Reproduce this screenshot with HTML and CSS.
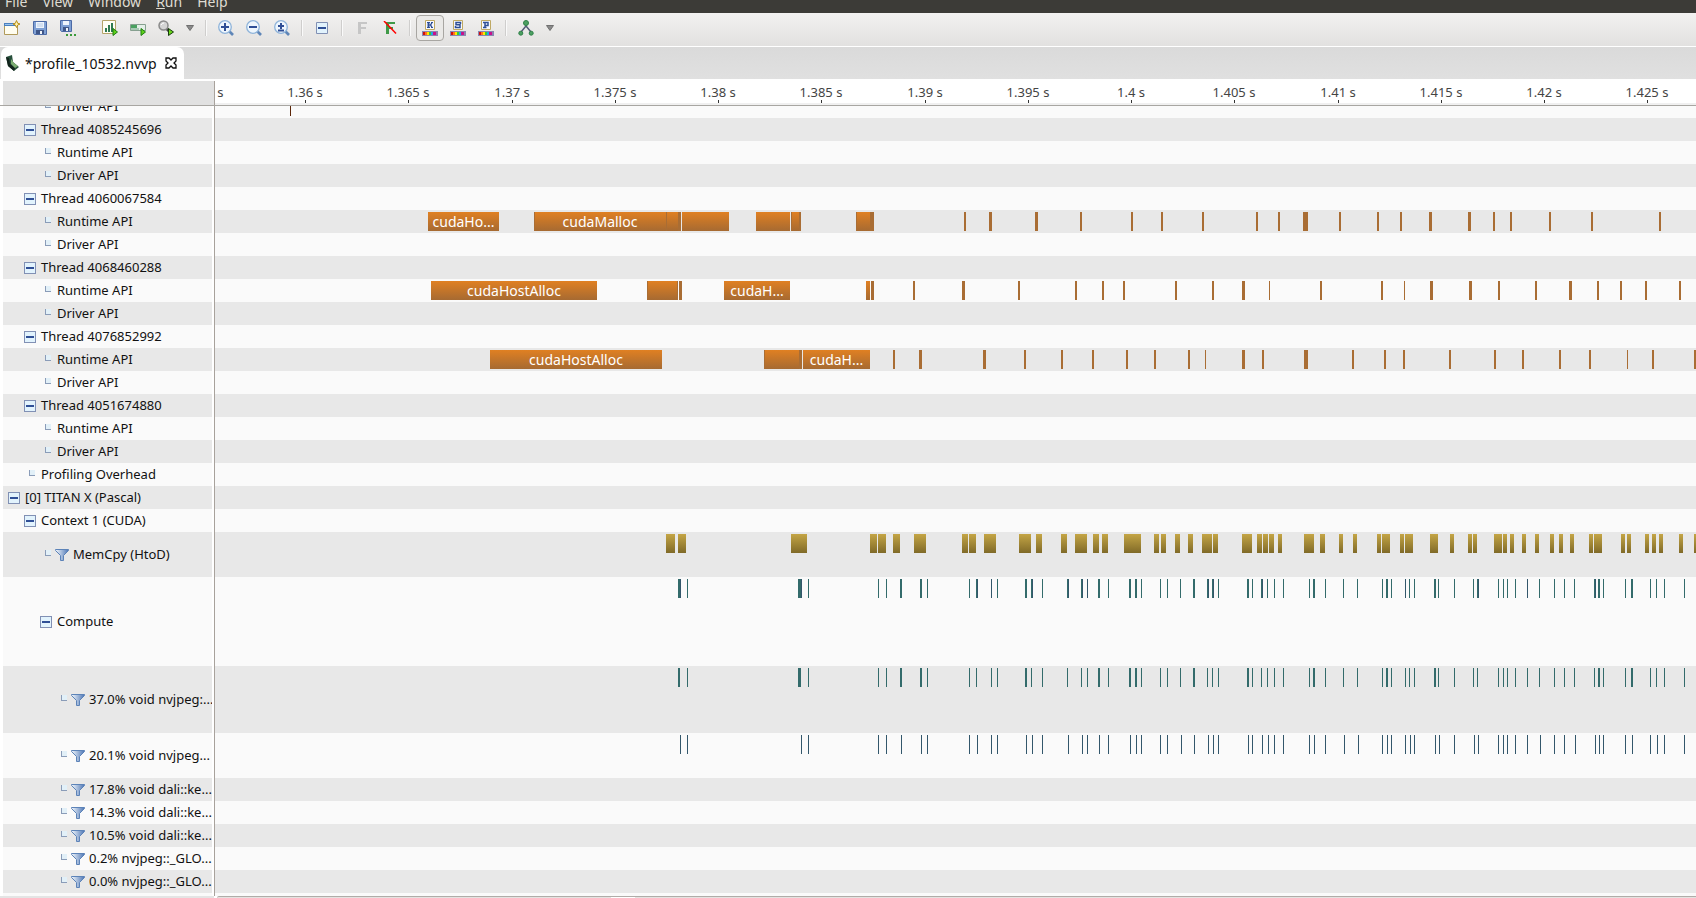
FILE: index.html
```html
<!DOCTYPE html>
<html lang="en">
<head>
    <meta charset="UTF-8">
    <meta name="viewport" content="width=device-width, initial-scale=1.0">
    <title>profile_10532.nvvp</title>
    <link rel="stylesheet" href="styles.css">
</head>
<body>
    <!-- Shared icons -->
    <svg class="defs" width="0" height="0" aria-hidden="true">
        <defs>
            <linearGradient id="funnelFill" x1="0" x2="1">
                <stop offset="0" stop-color="#f4f9fd"/>
                <stop offset="1" stop-color="#4b74b4"/>
            </linearGradient>
            <symbol id="play" viewBox="0 0 6 8">
                <path d="M1 0.5L5.5 4 1 7.5z" fill="#5fd11a" stroke="#1c7d10"/>
            </symbol>
            <symbol id="filter" viewBox="0 0 14 12">
                <path d="M0.5 0.5h13v1L8.500 6.500v5h-3v-5L0.500 1.500z" fill="url(#funnelFill)" stroke="#5c83b8"/>
            </symbol>
            <symbol id="glass" viewBox="0 0 16 16">
                <path d="M11 11l4 4" stroke="#5f86b8" stroke-width="2.600"/>
                <circle cx="7" cy="7" r="6.300" fill="#eef6fd" stroke="#8fb4da" stroke-width="1.300"/>
            </symbol>
            <symbol id="strip" viewBox="0 0 16 5">
                <path d="M0 0h16v5H0z" fill="#8a86b0"/>
                <path d="M1 1h2v3H1z" fill="#d01010"/><path d="M3 1h2v3H3z" fill="#ff7020"/>
                <path d="M5 1h2v3H5z" fill="#ffe800"/><path d="M7 1h2v3H7z" fill="#38c838"/>
                <path d="M9 1h2v3H9z" fill="#20a8e8"/><path d="M11 1h3v3h-3z" fill="#c8108c"/>
            </symbol>
        </defs>
    </svg>

    <nav class="menubar">
        <button>File</button>
        <button>View</button>
        <button>Window</button>
        <button><u>R</u>un</button>
        <button>Help</button>
    </nav>

    <div class="toolbar" role="toolbar">
        <button class="tool" aria-label="New session">
            <svg width="16" height="16" viewBox="0 0 16 16"><path d="M0.500 3.500h13v11h-13z" fill="#fffdf0" stroke="#b09a5a"/><path d="M0 3h11v3H0z" fill="#4a80c0"/><path d="M1 4h9v1H1z" fill="#9cc4ec"/><path d="M12.500 0.500l1.200 2.800 2.300 0.700-2.300 1-1.200 2.500-1.200-2.500L9 4l2.300-0.700z" fill="#fff4b0" stroke="#b8901c"/></svg>
        </button>
        <button class="tool" aria-label="Save">
            <svg width="16" height="16" viewBox="0 0 16 16"><path d="M1.500 1.500h13v13h-12l-1-1z" fill="#7fa0d4" stroke="#4c6aa6"/><path d="M4 2h8v6H4z" fill="#eef4fc"/><path d="M5 4h6M5 6h6" stroke="#b8cce6"/><path d="M4 10h8v4H4z" fill="#3f5688"/><path d="M8 11h2v3H8z" fill="#f0f4fa"/></svg>
        </button>
        <button class="tool" aria-label="Save as">
            <svg width="16" height="16" viewBox="0 0 16 16"><path d="M0.500 0.500h11v11h-10l-1-1z" fill="#7fa0d4" stroke="#4c6aa6"/><path d="M3 1h6v4H3z" fill="#eef4fc"/><path d="M3 7h6v4H3z" fill="#3f5688"/><path d="M6 8h2v3H6z" fill="#f0f4fa"/><path d="M6 14h2v2H6zM10 14h2v2h-2zM14 14h2v2h-2z" fill="#3a9a3a"/></svg>
        </button>
        <span class="space"></span>
        <button class="tool" aria-label="Analyze application">
            <svg width="16" height="16" viewBox="0 0 16 16"><path d="M0.500 0.500h13v13h-13z" fill="#fffef4" stroke="#b5a468"/><path d="M3 8h2v4H3zM6 5h2v7H6zM9 3h2v9H9z" fill="#2f7a50"/><use href="#play" x="10" y="8" width="6" height="8"/></svg>
        </button>
        <button class="tool" aria-label="Run application">
            <svg width="16" height="16" viewBox="0 0 16 16"><path d="M0.500 4.500h15v6h-15z" fill="#e4efe8" stroke="#86a090"/><path d="M1 5h6v3H1z" fill="#4aa060"/><path d="M1 8h8v2H1z" fill="#a8c8b4"/><use href="#play" x="10" y="8" width="6" height="8"/></svg>
        </button>
        <button class="tool" aria-label="Configure metrics">
            <svg width="16" height="16" viewBox="0 0 16 16"><path d="M8.500 8.500l4 4" stroke="#444" stroke-width="3"/><circle cx="5.500" cy="5.500" r="4.500" fill="#d4d4d4" stroke="#8a8a8a" stroke-width="1.500"/><path d="M3 5q1-2 3-2" stroke="#fff" fill="none"/><path d="M10.500 8.500L15.500 12l-5 3.500z" fill="#6ad61c" stroke="#163c0c"/></svg>
        </button>
        <button class="tool drop" aria-label="More profiling options">
            <svg width="8" height="6" viewBox="0 0 8 6"><path d="M0.500 0.500h7L4 5.500z" fill="#8a8a8a" stroke="#707070"/></svg>
        </button>
        <span class="sep"></span>
        <button class="tool" aria-label="Zoom in">
            <svg width="16" height="16"><use href="#glass"/><path d="M3 7h8M7 3v8" stroke="#2f4f96" stroke-width="2"/></svg>
        </button>
        <button class="tool" aria-label="Zoom out">
            <svg width="16" height="16"><use href="#glass"/><path d="M3 7h8" stroke="#2f4f96" stroke-width="2"/></svg>
        </button>
        <button class="tool" aria-label="Zoom to fit">
            <svg width="16" height="16"><use href="#glass"/><path d="M4 6h6M7 3v6M4 10.500h6" stroke="#2f4f96" stroke-width="2"/></svg>
        </button>
        <span class="sep"></span>
        <button class="tool" aria-label="Collapse all">
            <svg width="12" height="12"><path d="M0.500 0.500h11v11h-11z" fill="#e2f3fd" stroke="#8190b4"/><path d="M2 5h8v2H2z" fill="#2f4f96"/></svg>
        </button>
        <span class="sep"></span>
        <button class="tool" aria-label="Filter" disabled>
            <svg width="12" height="12"><path d="M2 0h9v2H5v3h5v2H5v5H2z" fill="#c6c6c6"/></svg>
        </button>
        <button class="tool" aria-label="Clear filter">
            <svg width="14" height="14"><path d="M3 1h9v2H6v3h4v2H6v5H3z" fill="#3f9a48"/><path d="M1 0l12 12.500" stroke="#f00" stroke-width="1.500"/></svg>
        </button>
        <span class="sep"></span>
        <button class="tool pressed" aria-label="Color by kernel" aria-pressed="true">
            <svg width="16" height="16"><path d="M3.500 0.500h9v9h-9z" fill="#f6f9ff" stroke="#bfa964"/><path d="M5 2h3v1H7.500v1.500H8L9 3V2h2v1h-0.500L9.300 5l1.200 2h0.500v1H9V7L8 5.500h-0.500V7H8v1H5V7h0.500V3H5z" fill="#2f4f96"/><use href="#strip" y="11" width="16" height="5"/></svg>
        </button>
        <button class="tool" aria-label="Color by stream">
            <svg width="16" height="16"><path d="M3.500 0.500h9v9h-9z" fill="#f6f9ff" stroke="#bfa964"/><path d="M10.500 4V2.500H6v2.300h4v2.700H5.500V6" fill="none" stroke="#2f4f96" stroke-width="1.500"/><use href="#strip" y="11" width="16" height="5"/></svg>
        </button>
        <button class="tool" aria-label="Color by process">
            <svg width="16" height="16"><path d="M3.500 0.500h9v9h-9z" fill="#f6f9ff" stroke="#bfa964"/><path d="M5 2.500h5v3H7M7 2v5.500M5 7.500h3.500" fill="none" stroke="#2f4f96" stroke-width="1.500"/><use href="#strip" y="11" width="16" height="5"/></svg>
        </button>
        <span class="sep"></span>
        <button class="tool" aria-label="Dependency analysis">
            <svg width="16" height="16"><path d="M8 4v2L3 12M8 6l5 6" fill="none" stroke="#555c78" stroke-width="1.500"/><g fill="#4da062" stroke="#2f8048"><circle cx="8" cy="3" r="2.500"/><circle cx="2.800" cy="13.200" r="2"/><circle cx="13.200" cy="13.200" r="2"/></g></svg>
        </button>
        <button class="tool drop" aria-label="More dependency options">
            <svg width="8" height="6" viewBox="0 0 8 6"><path d="M0.500 0.500h7L4 5.500z" fill="#8a8a8a" stroke="#707070"/></svg>
        </button>
    </div>

    <div class="tabs">
        <div class="tab">
            <svg width="14" height="16" viewBox="0 0 14 16"><path d="M0 2l6-2 1 7 6 5-5 4-6-5z" fill="#28503c"/><path d="M0 2l3 1 1 6 5 4-1 3-6-5z" fill="#12241c"/><path d="M5 4l3 4 4 3-3 2-4-4z" fill="#7cae72"/></svg>
            <span>*profile_10532.nvvp</span>
            <button class="close" aria-label="Close tab">
                <svg width="12" height="12"><path d="M1 1h3l2 2 2-2h3v3L9 6l2 2v3H8L6 9l-2 2H1V8l2-2-2-2z" fill="#fff" stroke="#111" stroke-width="1.300"/></svg>
            </button>
        </div>
    </div>

    <main class="timeline">
        <div class="ruler">
            <div class="corner"></div>
            <div class="scale" id="scale"></div>
        </div>
        <div class="rows" id="rows"></div>
        <div class="scroll">
            <div class="scroll-left"></div>
            <div class="scroll-bar"><span class="thumb"></span></div>
        </div>
    </main>

    <script src="script.js"></script>
</body>
</html>
```
FILE: styles.css
```css
* {
    margin: 0;
    padding: 0;
    box-sizing: border-box;
}

body {
    display: flex;
    flex-direction: column;
    height: 100vh;
    overflow: hidden;
    background: #fff;
    color: #111;
    font-family: "Noto Sans", "Open Sans", sans-serif;
    font-size: 13px;
}

button {
    border: none;
    background: none;
    color: inherit;
    font: inherit;
}

svg {
    display: block;
    flex: none;
}

.defs {
    position: absolute;
}

/* Menu bar, cut off by the top of the window */
.menubar {
    display: flex;
    flex: none;
    align-items: flex-end;
    gap: 15px;
    height: 13px;
    padding: 0 5px 1px;
    overflow: hidden;
    background: #3c3b37;
    color: #dfdbd2;
    font-size: 14px;
    line-height: 20px;
}

/* Toolbar */
.toolbar {
    display: flex;
    flex: none;
    align-items: center;
    height: 34px;
    margin-left: -2px;
    padding-bottom: 4px;
    background: linear-gradient(#f2f1f0, #e2e1e0);
    border-bottom: 1px solid #fff;
}

.tool {
    display: flex;
    align-items: center;
    justify-content: center;
    width: 28px;
    height: 26px;
}

.drop {
    width: 20px;
}

.space {
    width: 14px;
}

.sep {
    width: 12px;
    height: 16px;
    background: linear-gradient(90deg, #cfcecd 50%, #fafafa 50%) center / 2px 100% no-repeat;
}

.pressed {
    border: 1px solid #a8a6a2;
    border-radius: 4px;
    background: #eae9e7;
}

/* Editor tab */
.tabs {
    display: flex;
    flex: none;
    height: 32px;
    padding-left: 1px;
    background: linear-gradient(#dadada, #e0e0e0);
}

.tab {
    display: flex;
    align-items: center;
    gap: 5px;
    padding: 0 7px 0 5px;
    border-radius: 7px 7px 0 0;
    background: #fff;
    font-size: 14px;
}

.close {
    margin-left: 3px;
}

/* Timeline */
.timeline {
    display: flex;
    flex: 1;
    flex-direction: column;
    min-height: 0;
    padding-top: 2px;
}

.ruler {
    display: flex;
    flex: none;
    height: 25px;
    border-bottom: 1px solid #a8a6a2;
}

.corner {
    width: 212px;
    margin-left: 3px;
    background: #e1e1e1;
    border-right: 1px solid #a8a29c;
}

.scale {
    position: relative;
    flex: 1;
    overflow: hidden;
    border-bottom: 2px solid #f0f0f0;
    color: #444;
}

.mark {
    position: absolute;
    top: 0;
    bottom: 0;
    display: flex;
    flex-direction: column;
    align-items: center;
    justify-content: space-between;
    width: 60px;
    margin-left: -30px;
    line-height: 22px;
}

.mark::after {
    content: "";
    width: 1px;
    height: 3px;
    margin-top: -3px;
    background: #333;
}

.rows {
    flex: 1;
    min-height: 0;
    overflow: hidden;
    background: linear-gradient(#a8a29c, #a8a29c) 214px 0 / 1px 100% no-repeat;
}

.row {
    display: flex;
    height: 23px;
    margin-left: 3px;
}

.row.cut {
    align-items: flex-end;
    height: 12px;
    overflow: hidden;
}

.row.mid {
    height: 45px;
}

.row.big {
    height: 67px;
}

.row.huge {
    height: 89px;
}

.label {
    display: flex;
    flex: none;
    align-items: center;
    width: 209px;
    overflow: hidden;
    line-height: 23px;
    white-space: nowrap;
}

.label,
.track {
    background: #fafafa;
}

.row:nth-child(even) .label,
.row:nth-child(even) .track {
    background: #e8e8e8;
}

/* Indent by tree depth */
.depth0 { padding-left: 5px; }
.depth1 { padding-left: 21px; }
.depth2 { padding-left: 37px; }
.depth3 { padding-left: 53px; }

.toggle {
    flex: none;
    width: 12px;
    height: 12px;
    margin-right: 5px;
    border: 1px solid #8190b4;
    background: linear-gradient(#2f4f96, #2f4f96) center / 8px 2px no-repeat #e2f3fd;
}

.branch {
    flex: none;
    width: 6px;
    height: 6px;
    margin: 0 6px 4px 5px;
    border: solid #8a9cb8;
    border-width: 0 0 1px 1px;
    background: #e2f0f8;
}

.filter {
    margin: 0 4px 0 -2px;
}

.track {
    position: relative;
    flex: 1;
    margin-left: 3px;
    overflow: hidden;
}

.cut .track {
    height: 23px;
}

/* Events sit on the time axis */
.bar {
    position: absolute;
    top: 2px;
    height: 19px;
    overflow: hidden;
    color: #fff;
    font-size: 14px;
    line-height: 19px;
    text-align: center;
    white-space: nowrap;
}

.api { background: linear-gradient(#e08022, #a66a32); }
.call { background: #a96d34; }
.driver { background: #5c2608; }
.copy { background: linear-gradient(#c4a545, #806a28); }
.kernel-a { background: #336b6b; }
.kernel-b { background: #33576b; }

/* Horizontal scroll bar */
.scroll {
    display: flex;
    flex: none;
    height: 2px;
}

.scroll-left {
    width: 214px;
    background: #e4e4e4;
}

.scroll-bar {
    flex: 1;
    margin-left: 3px;
    background: #e4e2e0;
    border-top: 1px solid #b0aca8;
    border-radius: 4px 0 0 0;
}

.thumb {
    display: block;
    width: 24px;
    height: 1px;
    margin-left: 394px;
    background: #fff;
}
```
FILE: script.js
```js
// Left edge of the tracks; event positions below are window pixels
const ORIGIN = 215;
const SECOND = 20650;

// api: [x, width, label], the rest: [x, width]
const tracks = {
    t4060: {
        api: [[428, 71, "cudaHo..."], [534, 132, "cudaMalloc"], [666, 15], [682, 47], [756, 34], [791, 10], [856, 18]],
        call: [[534, 1], [666, 1], [678, 3], [791, 1], [799, 2], [856, 1], [870, 4], [964, 2], [989, 3], [1035, 3], [1080, 2],
            [1131, 2], [1161, 2], [1202, 2], [1256, 2], [1278, 2], [1303, 5], [1339, 2], [1377, 2], [1400, 2], [1429, 3],
            [1468, 3], [1493, 2], [1510, 2], [1549, 2], [1591, 2], [1659, 2]]
    },
    t4068: {
        api: [[431, 166, "cudaHostAlloc"], [647, 31], [724, 66, "cudaH..."], [866, 4]],
        call: [[647, 1], [677, 1], [679, 3], [871, 3], [913, 2], [962, 3], [1018, 2], [1075, 2], [1102, 2], [1123, 2], [1175, 2],
            [1212, 2], [1242, 3], [1269, 1], [1320, 2], [1381, 2], [1404, 1], [1430, 3], [1469, 3], [1498, 2], [1535, 2],
            [1569, 3], [1597, 2], [1620, 2], [1645, 2], [1679, 2]]
    },
    t4076: {
        api: [[490, 172, "cudaHostAlloc"], [764, 38], [803, 67, "cudaH..."]],
        call: [[764, 1], [799, 3], [893, 2], [919, 3], [983, 3], [1024, 2], [1061, 2], [1092, 2], [1126, 2], [1154, 2], [1188, 2],
            [1205, 1], [1242, 3], [1262, 2], [1304, 4], [1352, 2], [1384, 2], [1403, 2], [1449, 2], [1494, 2], [1522, 2],
            [1559, 2], [1589, 2], [1627, 1], [1652, 2], [1694, 2]]
    },
    driver: { driver: [[290, 1]] },
    memcpy: {
        copy: [[666, 9], [678, 8], [791, 16], [870, 7], [878, 8], [893, 7], [914, 12], [962, 6], [969, 7], [984, 12],
            [1019, 12], [1036, 6], [1061, 6], [1075, 12], [1093, 6], [1102, 6], [1124, 17], [1154, 5], [1161, 5], [1175, 5],
            [1188, 5], [1202, 10], [1213, 5], [1242, 10], [1257, 5], [1263, 5], [1269, 5], [1278, 4], [1304, 10], [1320, 5],
            [1339, 4], [1353, 4], [1377, 4], [1382, 8], [1400, 4], [1405, 8], [1430, 8], [1450, 4], [1468, 4], [1473, 4],
            [1494, 8], [1503, 4], [1510, 4], [1522, 4], [1535, 4], [1550, 4], [1559, 4], [1570, 4], [1589, 4], [1594, 8],
            [1621, 4], [1627, 4], [1645, 4], [1652, 4], [1659, 4], [1679, 4], [1694, 4]]
    }
};

const wide = { 678: 2, 798: 3, 900: 2, 920: 2, 1025: 2, 1098: 2, 1129: 2, 1135: 2, 1193: 2, 1247: 2, 1313: 2, 1386: 2, 1434: 2, 1598: 2, 1631: 2 };
const kernelA = [678, 687, 798, 808, 878, 886, 900, 920, 927, 969, 976, 991, 997, 1025, 1031, 1042, 1067, 1081, 1087, 1098,
    1108, 1129, 1135, 1141, 1160, 1167, 1180, 1193, 1207, 1212, 1218, 1247, 1252, 1261, 1267, 1274, 1283, 1309, 1313, 1325,
    1343, 1357, 1382, 1386, 1391, 1405, 1409, 1414, 1434, 1438, 1454, 1473, 1477, 1498, 1503, 1507, 1515, 1527, 1539, 1554,
    1564, 1574, 1594, 1598, 1603, 1625, 1631, 1650, 1656, 1664, 1684].map(x => [x, wide[x] || 1]);
const kernelB = [680, 687, 801, 808, 878, 886, 901, 921, 927, 969, 977, 991, 997, 1026, 1032, 1042, 1068, 1082, 1087, 1099,
    1108, 1130, 1136, 1141, 1160, 1167, 1181, 1194, 1208, 1213, 1218, 1248, 1252, 1262, 1268, 1274, 1283, 1309, 1314, 1325,
    1344, 1358, 1382, 1387, 1391, 1405, 1410, 1414, 1435, 1439, 1454, 1474, 1478, 1498, 1503, 1507, 1515, 1527, 1540, 1554,
    1564, 1575, 1595, 1599, 1603, 1625, 1632, 1650, 1657, 1664, 1684].map(x => [x, 1]);

// B kernels that fall in the same slot as an A kernel are not drawn on the Compute row
const hidden = [1181, 1268, 1344, 1358, 1410, 1439, 1474, 1540, 1575, 1657];
const onlyB = [991, 1087, 1405, 1527];

tracks.kernelA = { "kernel-a": kernelA };
tracks.kernelB = { "kernel-b": kernelB };
tracks.compute = {
    "kernel-b": kernelB.filter(k => !hidden.includes(k[0])),
    "kernel-a": kernelA.filter(k => !onlyB.includes(k[0]))
};

// [depth, icon, label, height class, track]
const rows = [
    [2, "leaf", "Driver API", "cut", "driver"],
    [1, "open", "Thread 4085245696"],
    [2, "leaf", "Runtime API"],
    [2, "leaf", "Driver API"],
    [1, "open", "Thread 4060067584"],
    [2, "leaf", "Runtime API", "", "t4060"],
    [2, "leaf", "Driver API"],
    [1, "open", "Thread 4068460288"],
    [2, "leaf", "Runtime API", "", "t4068"],
    [2, "leaf", "Driver API"],
    [1, "open", "Thread 4076852992"],
    [2, "leaf", "Runtime API", "", "t4076"],
    [2, "leaf", "Driver API"],
    [1, "open", "Thread 4051674880"],
    [2, "leaf", "Runtime API"],
    [2, "leaf", "Driver API"],
    [1, "leaf", "Profiling Overhead"],
    [0, "open", "[0] TITAN X (Pascal)"],
    [1, "open", "Context 1 (CUDA)"],
    [2, "filter", "MemCpy (HtoD)", "mid", "memcpy"],
    [2, "open", "Compute", "huge", "compute"],
    [3, "filter", "37.0% void nvjpeg:...", "big", "kernelA"],
    [3, "filter", "20.1% void nvjpeg...", "mid", "kernelB"],
    [3, "filter", "17.8% void dali::ke..."],
    [3, "filter", "14.3% void dali::ke..."],
    [3, "filter", "10.5% void dali::ke..."],
    [3, "filter", "0.2% nvjpeg::_GLO..."],
    [3, "filter", "0.0% nvjpeg::_GLO..."],
    [0, "none", ""]
];

const branch = '<span class="branch"></span>';
const icons = {
    open: '<button class="toggle" aria-label="Collapse"></button>',
    leaf: branch,
    filter: branch + '<svg class="filter" width="14" height="12"><use href="#filter"/></svg>',
    none: ""
};

function drawBars(track) {
    return Object.entries(track || {}).map(([kind, bars]) =>
        bars.map(([x, w, text]) =>
            `<div class="bar ${kind}" style="left:${x - ORIGIN}px;width:${w}px">${text || ""}</div>`
        ).join("")
    ).join("");
}

document.getElementById("rows").innerHTML = rows.map(([depth, icon, text, size, track]) => `
    <div class="row ${size || ""}">
        <div class="label depth${depth}">${icons[icon]}<span>${text}</span></div>
        <div class="track">${drawBars(tracks[track])}</div>
    </div>
`).join("");

// Ruler: one mark every 5 ms
let marks = "";
for (let ms = 1355; ms <= 1430; ms += 5) {
    const left = Math.round(90 + (ms - 1360) / 1000 * SECOND);
    marks += `<div class="mark" style="left:${left}px">${ms / 1000} s</div>`;
}
document.getElementById("scale").innerHTML = marks;
```
